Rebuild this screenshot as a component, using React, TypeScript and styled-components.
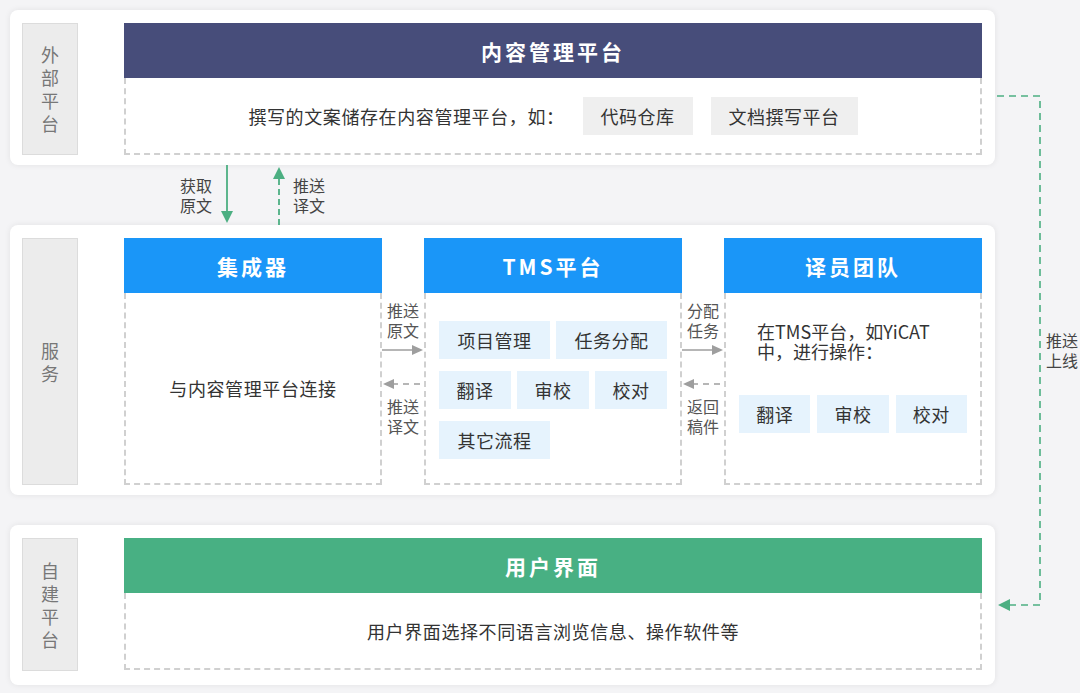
import React from "react";
import styled, { createGlobalStyle } from "styled-components";

const Global = createGlobalStyle`
  html, body { margin: 0; padding: 0; background: #f4f4f6; }
  body { font-family: "Noto Sans CJK SC", "Noto Sans", sans-serif; color: #333; }
`;

const Page = styled.div`
  position: relative; width: 1080px; height: 693px; padding: 10px 0 0 10px; box-sizing: border-box;
`;
const Panel = styled.div<{ h: number }>`
  width: 985px; height: ${p => p.h}px; box-sizing: border-box; background: #fff; border-radius: 8px;
  box-shadow: 0 0 6px rgba(0,0,0,0.08); padding: 13px 13px 0 12px; display: flex; gap: 46px;
`;
const Label = styled.div<{ h: number }>`
  width: 56px; height: ${p => p.h}px; box-sizing: border-box; background: #ececec; border: 1px solid #dcdcdc;
  display: flex; flex-direction: column; align-items: center; justify-content: center;
  color: #777; font-size: 18px; line-height: 23px;
`;
const Columns = styled.div`display: flex; gap: 42px; width: 858px;`;
const Col = styled.div<{ w: number }>`width: ${p => p.w}px; display: flex; flex-direction: column;`;
const Header = styled.div<{ bg: string }>`
  height: 55px; background: ${p => p.bg}; color: #fff; font-size: 21px; font-weight: 700;
  display: flex; align-items: center; justify-content: center; letter-spacing: 3px;
`;
const Body = styled.div<{ h: number }>`
  height: ${p => p.h}px; box-sizing: border-box; border: 2px dashed #d0d0d0; border-top: none;
  display: flex; align-items: center; justify-content: center; font-size: 18px; color: #333; gap: 18px;
  letter-spacing: 0.6px;
`;
const Chip = styled.div<{ gray?: boolean; span?: number }>`
  background: ${p => (p.gray ? "#efefef" : "#e6f3fd")}; height: 38px; padding: 0 18px;
  display: flex; align-items: center; justify-content: center; font-size: 18px; color: #333;
  grid-column: span ${p => p.span || 1}; letter-spacing: 0.5px;
`;
const TmsBody = styled.div`
  height: 192px; box-sizing: border-box; border: 2px dashed #d0d0d0; border-top: none;
  padding: 28px 13px 0 13px;
  display: grid; grid-template-columns: repeat(6, 1fr); column-gap: 6px; row-gap: 12px; align-content: start;
  & > div { padding: 0; }
`;
const TeamBody = styled.div`
  height: 192px; box-sizing: border-box; border: 2px dashed #d0d0d0; border-top: none;
  padding: 28px 13px 0 13px; display: flex; flex-direction: column;
`;
const TeamText = styled.div`font-size: 18px; line-height: 20px; padding-left: 18px; color: #333; white-space: nowrap;`;
const TeamChips = styled.div`display: grid; grid-template-columns: repeat(3, 1fr); gap: 7px; margin-top: 34px; & > div { padding: 0; }`;
const Side = styled.div`
  width: 42px; margin: 0 -42px; position: relative; z-index: 1;
  display: flex; flex-direction: column; align-items: center; padding-top: 62px; box-sizing: border-box;
`;
const Small = styled.div<{ c?: string }>`font-size: 16px; line-height: 20px; color: ${p => p.c || "#444"}; text-align: center;`;
const Gap = styled.div`
  height: 60px; display: flex; align-items: center; padding-left: 170px;
`;
const Overlay = styled.svg`position: absolute; left: 0; top: 0; pointer-events: none;`;
const RightLabel = styled.div`position: absolute; left: 1046px; top: 330px; font-size: 16px; line-height: 20px; color: #444;`;

const HArrow = ({ dir, dashed }: { dir: "r" | "l"; dashed?: boolean }) => (
  <svg width="42" height="12" viewBox="0 0 42 12" style={{ display: "block" }}>
    {dir === "r" ? (
      <>
        <line x1="0" y1="6" x2="32" y2="6" stroke="#9e9e9e" strokeWidth="1.5" strokeDasharray={dashed ? "6 5" : undefined} />
        <polygon points="30,1 41,6 30,11" fill="#9e9e9e" />
      </>
    ) : (
      <>
        <line x1="10" y1="6" x2="42" y2="6" stroke="#9e9e9e" strokeWidth="1.5" strokeDasharray={dashed ? "6 5" : undefined} />
        <polygon points="12,1 1,6 12,11" fill="#9e9e9e" />
      </>
    )}
  </svg>
);

export default function App() {
  return (
    <Page>
      <Global />
      <Panel h={155}>
        <Label h={132}>{"外部平台".split("").map(c => <span key={c}>{c}</span>)}</Label>
        <Col w={858}>
          <Header bg="#474d7a">内容管理平台</Header>
          <Body h={77}>
            <span>撰写的文案储存在内容管理平台，如：</span>
            <Chip gray>代码仓库</Chip>
            <Chip gray>文档撰写平台</Chip>
          </Body>
        </Col>
      </Panel>
      <Gap>
        <Small>获取<br />原文</Small>
        <svg width="14" height="60" viewBox="0 0 14 60" style={{ marginLeft: 8 }}>
          <line x1="7" y1="0" x2="7" y2="48" stroke="#4caf82" strokeWidth="1.8" />
          <polygon points="1,46 13,46 7,58" fill="#4caf82" />
        </svg>
        <svg width="14" height="60" viewBox="0 0 14 60" style={{ marginLeft: 38 }}>
          <line x1="7" y1="60" x2="7" y2="12" stroke="#4caf82" strokeWidth="1.8" strokeDasharray="6 4" />
          <polygon points="1,14 13,14 7,2" fill="#4caf82" />
        </svg>
        <Small style={{ marginLeft: 7 }}>推送<br />译文</Small>
      </Gap>
      <Panel h={270}>
        <Label h={247}>{"服务".split("").map(c => <span key={c}>{c}</span>)}</Label>
        <Columns>
          <Col w={258}>
            <Header bg="#1a96f8">集成器</Header>
            <Body h={192}>与内容管理平台连接</Body>
          </Col>
          <Side>
            <Small c="#555">推送<br />原文</Small>
            <div style={{ marginTop: 4 }}><HArrow dir="r" /></div>
            <div style={{ marginTop: 22 }}><HArrow dir="l" dashed /></div>
            <Small c="#555" style={{ marginTop: 6 }}>推送<br />译文</Small>
          </Side>
          <Col w={258}>
            <Header bg="#1a96f8">TMS平台</Header>
            <TmsBody>
              <Chip span={3}>项目管理</Chip>
              <Chip span={3}>任务分配</Chip>
              <Chip span={2}>翻译</Chip>
              <Chip span={2}>审校</Chip>
              <Chip span={2}>校对</Chip>
              <Chip span={3}>其它流程</Chip>
            </TmsBody>
          </Col>
          <Side>
            <Small c="#555">分配<br />任务</Small>
            <div style={{ marginTop: 4 }}><HArrow dir="r" /></div>
            <div style={{ marginTop: 22 }}><HArrow dir="l" dashed /></div>
            <Small c="#555" style={{ marginTop: 6 }}>返回<br />稿件</Small>
          </Side>
          <Col w={258}>
            <Header bg="#1a96f8">译员团队</Header>
            <TeamBody>
              <TeamText>在TMS平台，如YiCAT<br />中，进行操作：</TeamText>
              <TeamChips>
                <Chip>翻译</Chip>
                <Chip>审校</Chip>
                <Chip>校对</Chip>
              </TeamChips>
            </TeamBody>
          </Col>
        </Columns>
      </Panel>
      <div style={{ height: 30 }} />
      <Panel h={160}>
        <Label h={133}>{"自建平台".split("").map(c => <span key={c}>{c}</span>)}</Label>
        <Col w={858}>
          <Header bg="#48b083">用户界面</Header>
          <Body h={77}>用户界面选择不同语言浏览信息、操作软件等</Body>
        </Col>
      </Panel>
      <Overlay width="1080" height="693">
        <path d="M997 96 H1040 V605 H1008" fill="none" stroke="#4caf82" strokeWidth="1.6" strokeDasharray="7 5" />
        <polygon points="998,605 1010,599 1010,611" fill="#4caf82" />
      </Overlay>
      <RightLabel>推送<br />上线</RightLabel>
    </Page>
  );
}
